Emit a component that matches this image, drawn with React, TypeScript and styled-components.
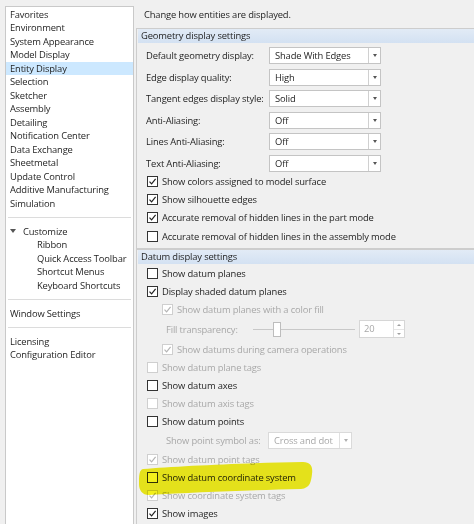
import React from 'react';
import styled, { createGlobalStyle, css } from 'styled-components';

const Global = createGlobalStyle`
  html, body { margin: 0; padding: 0; background: #f0f0f0; }
  body { font-family: "Open Sans", "Noto Sans", sans-serif; font-size: 9.4px; letter-spacing: -0.15px; color: #1f1f1f; }
  #root { width: 474px; height: 524px; overflow: hidden; }
`;

const Window = styled.div`
  position: relative;
  display: flex;
  align-items: flex-start;
  width: 474px;
  height: 524px;
  overflow: hidden;
  background: #f0f0f0;
`;

const Sidebar = styled.nav`
  flex: 0 0 129px;
  box-sizing: border-box;
  height: 560px;
  margin: 6px 0 0 5px;
  padding-top: 0.5px;
  background: #fff;
  border: 1px solid #c9c9c9;
  display: flex;
  flex-direction: column;
`;

const NavItem = styled.div<{ $active?: boolean; $indent?: number }>`
  flex: 0 0 13.5px;
  height: 13.5px;
  line-height: 13.5px;
  padding-left: ${(p) => 4 + (p.$indent ?? 0)}px;
  white-space: nowrap;
  background: ${(p) => (p.$active ? '#cce8ff' : 'transparent')};
  display: flex;
  align-items: center;
`;

const Triangle = styled.span`
  width: 0;
  height: 0;
  border-left: 3px solid transparent;
  border-right: 3px solid transparent;
  border-top: 4px solid #555;
  margin: 0 7px 0 0;
`;

const NavSep = styled.div`
  flex: 0 0 1px;
  height: 1px;
  background: #dcdcdc;
  margin: 7px 2px 6.5px;
`;

const Main = styled.main`
  flex: 1 0 0;
  display: flex;
  flex-direction: column;
  padding-left: 2px;
  min-width: 0;
`;

const Title = styled.div`
  flex: 0 0 28px;
  line-height: 14px;
  padding: 8px 0 0 8px;
  box-sizing: border-box;
  height: 28px;
  white-space: nowrap;
`;

const Group = styled.section`
  flex: 0 0 auto;
  width: 400px;
  border: 1px solid #cdcdcd;
  box-sizing: border-box;
`;

const GroupHeader = styled.div`
  height: 14px;
  line-height: 14px;
  margin: 0 0 0 1px;
  padding-left: 3px;
  background: linear-gradient(#e2ebf6, #d3e1f2);
  white-space: nowrap;
`;

const FieldGrid = styled.div`
  display: grid;
  grid-template-columns: 123px 112px;
  row-gap: 4.6px;
  padding: 4px 0 0 9px;
  align-items: center;
`;

const FieldLabel = styled.div`
  white-space: nowrap;
`;

const Select = styled.div<{ $disabled?: boolean; $width?: number }>`
  box-sizing: border-box;
  height: 17px;
  width: ${(p) => p.$width ?? 112}px;
  background: #fff;
  border: 1px solid ${(p) => (p.$disabled ? '#dadada' : '#c4c4c4')};
  display: flex;
  align-items: stretch;
  color: ${(p) => (p.$disabled ? '#a8a8a8' : '#1f1f1f')};
`;

const SelectValue = styled.div`
  flex: 1;
  padding-left: 5px;
  line-height: 15px;
  white-space: nowrap;
  overflow: hidden;
`;

const SelectArrow = styled.div<{ $disabled?: boolean }>`
  width: 11px;
  border-left: 1px solid ${(p) => (p.$disabled ? '#e0e0e0' : '#d0d0d0')};
  display: flex;
  align-items: center;
  justify-content: center;
  &::after {
    content: '';
    border-left: 2.5px solid transparent;
    border-right: 2.5px solid transparent;
    border-top: 3px solid ${(p) => (p.$disabled ? '#b0b0b0' : '#555')};
  }
`;

const CheckList = styled.div<{ $row: number }>`
  display: flex;
  flex-direction: column;
  padding-bottom: 3px;
  --row: ${(p) => p.$row}px;
`;

const CheckRow = styled.label<{ $indent?: number; $disabled?: boolean }>`
  flex: 0 0 var(--row);
  height: var(--row);
  display: flex;
  align-items: center;
  padding-left: ${(p) => 10 + (p.$indent ?? 0)}px;
  gap: 4px;
  white-space: nowrap;
  color: ${(p) => (p.$disabled ? '#a8a8a8' : '#1f1f1f')};
`;

const Box = styled.span<{ $disabled?: boolean }>`
  box-sizing: border-box;
  width: 11px;
  height: 11px;
  flex: 0 0 11px;
  background: #fff;
  border: 1px solid ${(p) => (p.$disabled ? '#cfcfcf' : '#333')};
  display: flex;
  align-items: center;
  justify-content: center;
`;

const ControlRow = styled.div<{ $h: number }>`
  flex: 0 0 ${(p) => p.$h}px;
  height: ${(p) => p.$h}px;
  display: flex;
  align-items: center;
  padding-left: 29px;
  color: #a8a8a8;
  white-space: nowrap;
`;

const SliderLabel = styled.span`
  width: 87px;
`;

const Track = styled.div`
  position: relative;
  width: 102px;
  height: 1px;
  background: #c8c8c8;
  margin-right: 4px;
`;

const Thumb = styled.div`
  position: absolute;
  left: 20px;
  top: -7px;
  width: 6px;
  height: 13px;
  background: #fff;
  border: 1px solid #bdbdbd;
`;

const Spin = styled.div`
  box-sizing: border-box;
  width: 46px;
  height: 18px;
  background: #fff;
  border: 1px solid #d6d6d6;
  display: flex;
`;

const SpinValue = styled.div`
  flex: 1;
  padding-left: 4px;
  line-height: 16px;
`;

const SpinArrows = styled.div`
  width: 10px;
  border-left: 1px solid #e0e0e0;
  display: flex;
  flex-direction: column;
  & > span {
    flex: 1;
    display: flex;
    align-items: center;
    justify-content: center;
  }
  & > span + span {
    border-top: 1px solid #e6e6e6;
  }
`;

const Tri = styled.i<{ $up?: boolean }>`
  border-left: 2px solid transparent;
  border-right: 2px solid transparent;
  ${(p) =>
    p.$up
      ? css`border-bottom: 2.5px solid #a0a0a0;`
      : css`border-top: 2.5px solid #a0a0a0;`}
`;

const PointLabel = styled.span`
  width: 102px;
`;

const Highlight = styled.svg`
  position: absolute;
  left: 137px;
  top: 461px;
  pointer-events: none;
  mix-blend-mode: multiply;
`;

function Check({ checked, disabled }: { checked?: boolean; disabled?: boolean }) {
  return (
    <Box $disabled={disabled}>
      {checked && (
        <svg width="9" height="9" viewBox="0 0 9 9">
          <path
            d="M1.5 4.6 L3.6 6.8 L7.6 1.8"
            fill="none"
            stroke={disabled ? '#b5b5b5' : '#222'}
            strokeWidth="1.2"
          />
        </svg>
      )}
    </Box>
  );
}

function CheckItem({
  label,
  checked,
  disabled,
  indent,
}: {
  label: string;
  checked?: boolean;
  disabled?: boolean;
  indent?: number;
}) {
  return (
    <CheckRow $indent={indent} $disabled={disabled}>
      <Check checked={checked} disabled={disabled} />
      <span>{label}</span>
    </CheckRow>
  );
}

function Dropdown({ value, disabled, width }: { value: string; disabled?: boolean; width?: number }) {
  return (
    <Select $disabled={disabled} $width={width}>
      <SelectValue>{value}</SelectValue>
      <SelectArrow $disabled={disabled} />
    </Select>
  );
}

const navTop = [
  'Favorites',
  'Environment',
  'System Appearance',
  'Model Display',
  'Entity Display',
  'Selection',
  'Sketcher',
  'Assembly',
  'Detailing',
  'Notification Center',
  'Data Exchange',
  'Sheetmetal',
  'Update Control',
  'Additive Manufacturing',
  'Simulation',
];

const customize = ['Ribbon', 'Quick Access Toolbar', 'Shortcut Menus', 'Keyboard Shortcuts'];

const fields: [string, string][] = [
  ['Default geometry display:', 'Shade With Edges'],
  ['Edge display quality:', 'High'],
  ['Tangent edges display style:', 'Solid'],
  ['Anti-Aliasing:', 'Off'],
  ['Lines Anti-Aliasing:', 'Off'],
  ['Text Anti-Aliasing:', 'Off'],
];

export default function App() {
  return (
    <Window>
      <Global />
      <Sidebar>
        {navTop.map((n) => (
          <NavItem key={n} $active={n === 'Entity Display'}>
            {n}
          </NavItem>
        ))}
        <NavSep />
        <NavItem>
          <Triangle />
          Customize
        </NavItem>
        {customize.map((n) => (
          <NavItem key={n} $indent={27}>
            {n}
          </NavItem>
        ))}
        <NavSep />
        <NavItem>Window Settings</NavItem>
        <NavSep />
        <NavItem>Licensing</NavItem>
        <NavItem>Configuration Editor</NavItem>
      </Sidebar>
      <Main>
        <Title>Change how entities are displayed.</Title>
        <Group>
          <GroupHeader>Geometry display settings</GroupHeader>
          <FieldGrid>
            {fields.map(([l, v]) => (
              <React.Fragment key={l}>
                <FieldLabel>{l}</FieldLabel>
                <Dropdown value={v} />
              </React.Fragment>
            ))}
          </FieldGrid>
          <CheckList $row={18.3}>
            <CheckItem label="Show colors assigned to model surface" checked />
            <CheckItem label="Show silhouette edges" checked />
            <CheckItem label="Accurate removal of hidden lines in the part mode" checked />
            <CheckItem label="Accurate removal of hidden lines in the assembly mode" />
          </CheckList>
        </Group>
        <Group>
          <GroupHeader>Datum display settings</GroupHeader>
          <CheckList $row={18.1}>
            <CheckItem label="Show datum planes" />
            <CheckItem label="Display shaded datum planes" checked />
            <CheckItem label="Show datum planes with a color fill" checked disabled indent={15} />
            <ControlRow $h={22}>
              <SliderLabel>Fill transparency:</SliderLabel>
              <Track>
                <Thumb />
              </Track>
              <Spin>
                <SpinValue>20</SpinValue>
                <SpinArrows>
                  <span>
                    <Tri $up />
                  </span>
                  <span>
                    <Tri />
                  </span>
                </SpinArrows>
              </Spin>
            </ControlRow>
            <CheckItem label="Show datums during camera operations" checked disabled indent={15} />
            <CheckItem label="Show datum plane tags" disabled />
            <CheckItem label="Show datum axes" />
            <CheckItem label="Show datum axis tags" disabled />
            <CheckItem label="Show datum points" />
            <ControlRow $h={19.5}>
              <PointLabel>Show point symbol as:</PointLabel>
              <Dropdown value="Cross and dot" disabled width={84} />
            </ControlRow>
            <CheckItem label="Show datum point tags" checked disabled />
            <CheckItem label="Show datum coordinate system" />
            <CheckItem label="Show coordinate system tags" checked disabled />
            <CheckItem label="Show images" checked />
          </CheckList>
        </Group>
      </Main>
      <Highlight width="180" height="36" viewBox="0 0 180 36">
        <path
          d="M6 8 C40 5 110 2 166 1 C174 1 176 6 175 13 C174 21 173 27 164 28 C120 29 60 31 12 34 C5 34 2 29 2 23 C2 15 2 9 6 8 Z"
          fill="#f3f01c"
        />
      </Highlight>
    </Window>
  );
}
